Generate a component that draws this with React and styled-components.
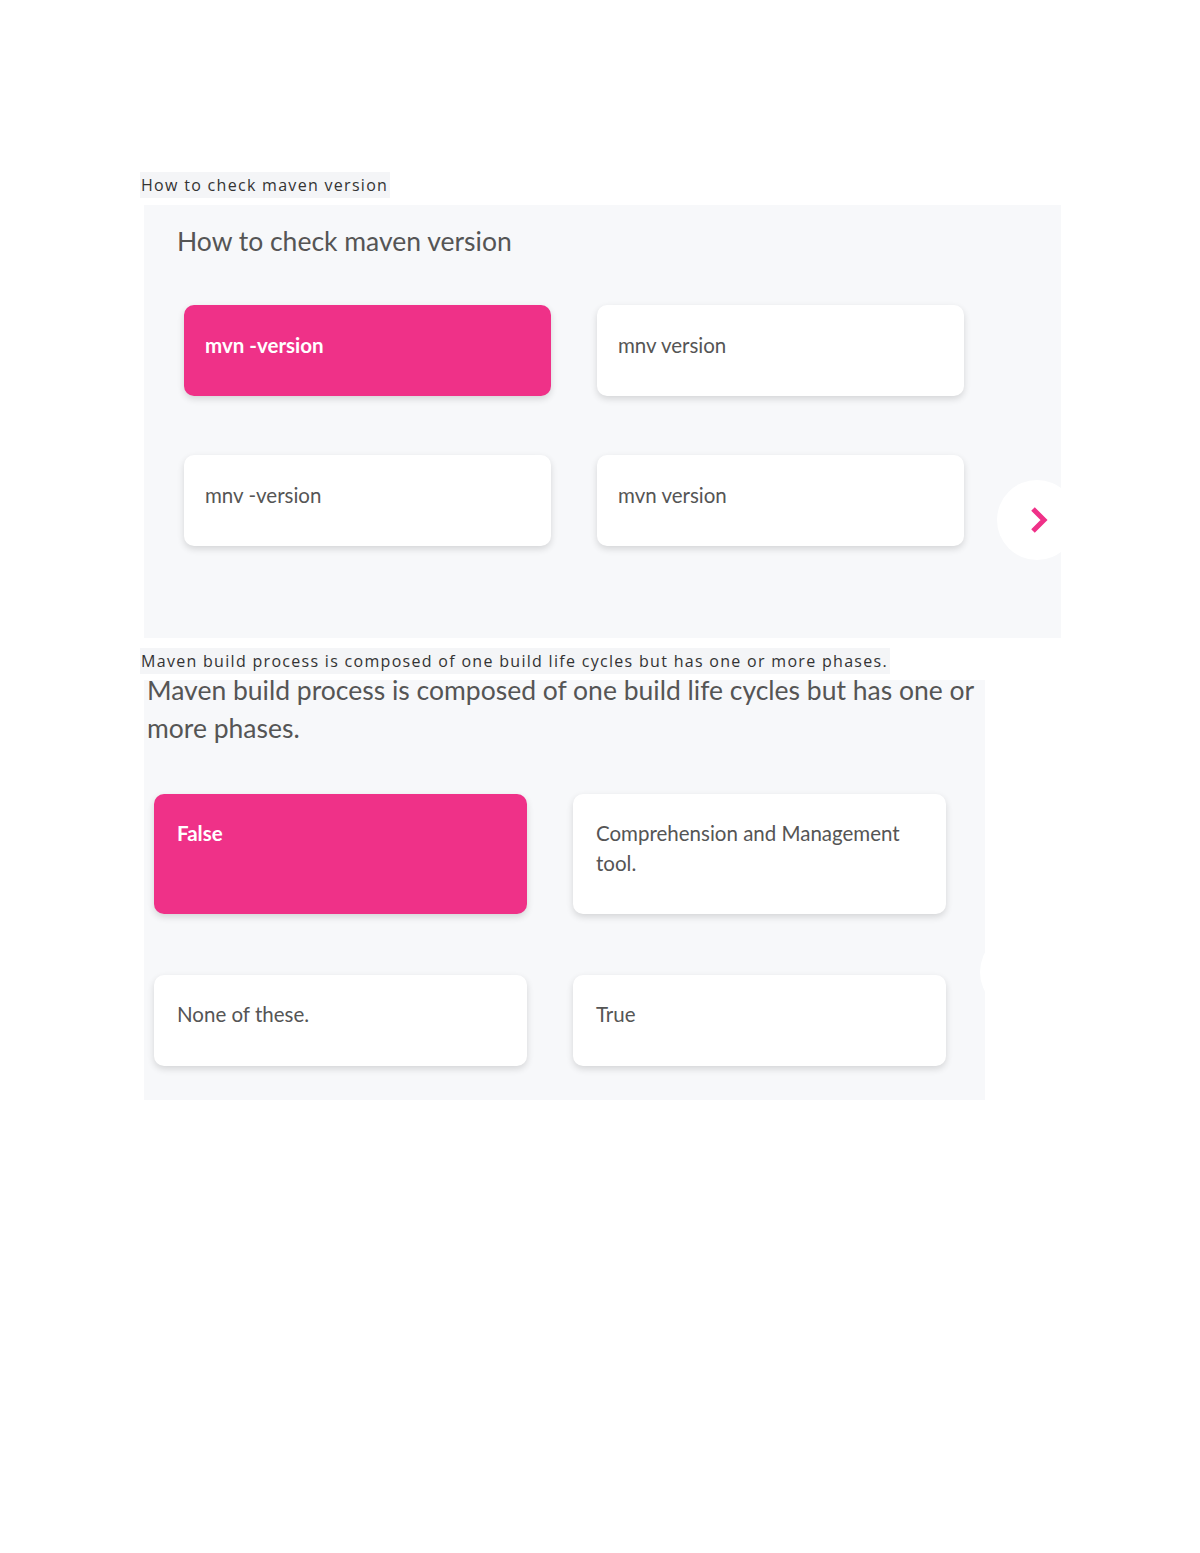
import styled, { createGlobalStyle } from "styled-components";

const GlobalStyle = createGlobalStyle`
  body {
    margin: 0;
    background: #ffffff;
  }
`;

const Page = styled.div`
  padding: 172px 0 0 140px;
  min-height: 1553px;
  box-sizing: border-box;
`;

const Caption = styled.div`
  display: inline-block;
  background: #f4f5f7;
  color: #333;
  font-family: "Open Sans", "Noto Sans", sans-serif;
  font-size: 16px;
  letter-spacing: 1.3px;
  line-height: 26px;
  padding: 0 2px 0 1px;
  margin-top: ${(p) => p.$mt || 0}px;
`;

const Panel = styled.div`
  display: flow-root;
  position: relative;
  overflow: ${(p) => (p.$clip ? "hidden" : "visible")};
  background: #f7f8fa;
  margin: ${(p) => p.$mt}px 0 0 4px;
  width: ${(p) => p.$width}px;
  height: ${(p) => p.$height}px;
  box-sizing: border-box;
  padding: ${(p) => p.$padding};
  font-family: Lato, "Open Sans", sans-serif;
`;

const Title = styled.h2`
  margin: 0;
  font-weight: 400;
  font-size: 26.5px;
  line-height: ${(p) => p.$lh}px;
  color: #555;
  margin-top: ${(p) => p.$mt || 0}px;
`;

const Grid = styled.div`
  display: grid;
  grid-template-columns: ${(p) => p.$col}px ${(p) => p.$col}px;
  grid-template-rows: ${(p) => p.$rows};
  column-gap: 46px;
  row-gap: ${(p) => p.$rowGap}px;
  margin-top: ${(p) => p.$mt}px;
  margin-left: ${(p) => p.$ml}px;
`;

const Card = styled.div`
  background: ${(p) => (p.$active ? "#ef3188" : "#ffffff")};
  color: ${(p) => (p.$active ? "#ffffff" : "#555")};
  font-weight: ${(p) => (p.$active ? 700 : 400)};
  border-radius: 10px;
  box-shadow: 0 3px 7px rgba(0, 0, 0, 0.14);
  padding: ${(p) => p.$pt}px 40px 0 ${(p) => p.$pl}px;
  font-size: 20.5px;
  line-height: 30px;
`;

const NextButton = styled.div`
  position: absolute;
  left: ${(p) => p.$left}px;
  top: ${(p) => p.$top}px;
  width: 80px;
  height: 80px;
  border-radius: 50%;
  background: #ffffff;
  display: flex;
  align-items: center;
  justify-content: center;
  clip-path: ${(p) => (p.$peek ? `inset(0 ${80 - p.$peek}px 0 0)` : "none")};

  svg {
    margin-left: 4px;
  }
`;

function Chevron() {
  return (
    <svg width="20" height="28" viewBox="0 0 20 28">
      <path
        d="M4 3 L15 14 L4 25"
        fill="none"
        stroke="#ef3188"
        strokeWidth="5"
        strokeLinejoin="miter"
      />
    </svg>
  );
}

function App() {
  return (
    <Page>
      <GlobalStyle />
      <Caption>How to check maven version</Caption>
      <Panel $clip $mt={7} $width={917} $height={433} $padding="20px 0 0 33px">
        <Title $lh={32}>How to check maven version</Title>
        <Grid $col={367} $rows="91px 91px" $rowGap={59} $mt={48} $ml={7}>
          <Card $active $pt={25} $pl={21}>mvn -version</Card>
          <Card $pt={25} $pl={21}>mnv version</Card>
          <Card $pt={25} $pl={21}>mnv -version</Card>
          <Card $pt={25} $pl={21}>mvn version</Card>
        </Grid>
        <NextButton $left={853} $top={275}>
          <Chevron />
        </NextButton>
      </Panel>

      <Caption $mt={10}>
        Maven build process is composed of one build life cycles but has one or more phases.
      </Caption>
      <Panel $mt={6} $width={841} $height={420} $padding="0 0 0 3px">
        <Title $lh={38} $mt={-9}>
          Maven build process is composed of one build life cycles but has one or more phases.
        </Title>
        <Grid $col={373} $rows="120px 91px" $rowGap={61} $mt={47} $ml={7}>
          <Card $active $pt={24} $pl={23}>False</Card>
          <Card $pt={24} $pl={23}>Comprehension and Management tool.</Card>
          <Card $pt={24} $pl={23}>None of these.</Card>
          <Card $pt={24} $pl={23}>True</Card>
        </Grid>
        <NextButton $left={836} $top={252} $peek={5} />
      </Panel>
    </Page>
  );
}

export default App;
